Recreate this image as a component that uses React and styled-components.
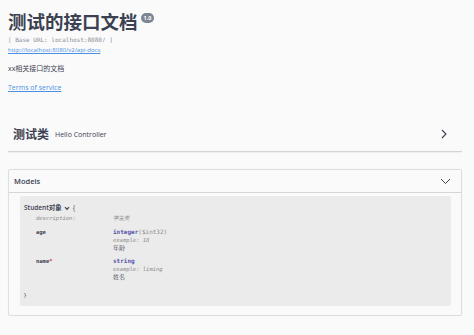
import React from 'react'
import styled, { createGlobalStyle } from 'styled-components'

const GlobalStyle = createGlobalStyle`
  html, body {
    margin: 0;
    padding: 0;
    background: #fafafa;
  }
  body {
    font-family: 'Open Sans', 'Noto Sans CJK SC', sans-serif;
    color: #3b4151;
  }
`

const SANS = `'Open Sans', 'Noto Sans CJK SC', sans-serif`
const MONO = `'DejaVu Sans Mono', 'Noto Sans CJK SC', monospace`

const ChevronRight = () => (
    <svg width="8" height="10" viewBox="0 0 8 10" fill="none">
        <path d="M2 1 L6 5 L2 9" stroke="#3b4151" strokeWidth="1.1" />
    </svg>
)

const ChevronDown = () => (
    <svg width="11" height="7" viewBox="0 0 11 7" fill="none">
        <path d="M1 1 L5.5 5.5 L10 1" stroke="#3b4151" strokeWidth="1" />
    </svg>
)

const SmallCaret = () => (
    <svg width="6" height="5" viewBox="0 0 6 5" fill="none">
        <path d="M1 1.2 L3 3.4 L5 1.2" stroke="#3b4151" strokeWidth="1.2" />
    </svg>
)

const App = () => {
    return (
        <>
            <GlobalStyle />
            <Page>
                <Info>
                    <Title>
                        测试的接口文档
                        <Version>1.0</Version>
                    </Title>
                    <BaseUrl>[ Base URL: localhost:8080/ ]</BaseUrl>
                    <DocLink href="#">http://localhost:8080/v2/api-docs</DocLink>
                    <Description>xx相关接口的文档</Description>
                    <Terms href="#">Terms of service</Terms>
                </Info>

                <TagRow>
                    <TagName>测试类</TagName>
                    <TagDesc>Hello Controller</TagDesc>
                    <TagArrow><ChevronRight /></TagArrow>
                </TagRow>

                <Models>
                    <ModelsHeader>
                        <span>Models</span>
                        <ChevronDown />
                    </ModelsHeader>
                    <ModelsBody>
                        <ModelBox>
                            <ModelTitle>
                                Student对象 <SmallCaret /> <Brace>{'{'}</Brace>
                            </ModelTitle>
                            <PropTable>
                                <PropName muted>description:</PropName>
                                <PropValue>
                                    <Example>学生类</Example>
                                </PropValue>

                                <PropName top="6px">age</PropName>
                                <PropValue top="6px">
                                    <TypeLine><Type>integer</Type><Format>($int32)</Format></TypeLine>
                                    <Example>example: 18</Example>
                                    <Note>年龄</Note>
                                </PropValue>

                                <PropName top="5px">name<Star>*</Star></PropName>
                                <PropValue top="5px">
                                    <TypeLine><Type>string</Type></TypeLine>
                                    <Example>example: liming</Example>
                                    <Note>姓名</Note>
                                </PropValue>
                            </PropTable>
                            <ClosingBrace>{'}'}</ClosingBrace>
                        </ModelBox>
                    </ModelsBody>
                </Models>
            </Page>
        </>
    )
}

export default App

const Page = styled.div`
padding: 0 12px 20px 8px;
`

const Info = styled.div`
padding-top: 10px;
display: flex;
flex-direction: column;
align-items: flex-start;
`

const Title = styled.h2`
margin: 0;
display: flex;
align-items: flex-start;
font-family: ${SANS};
font-size: 18.5px;
line-height: 24px;
font-weight: 700;
color: #3b4151;
`

const Version = styled.span`
margin: 3px 0 0 3px;
padding: 0 3px;
height: 10px;
line-height: 10px;
border-radius: 6px;
background: #7d8492;
color: #fff;
font-size: 5.5px;
font-weight: 700;
font-family: ${SANS};
`

const BaseUrl = styled.span`
margin-top: 1px;
font-family: ${MONO};
font-size: 6px;
line-height: 9px;
color: #8a8f99;
`

const DocLink = styled.a`
margin-top: 2px;
font-family: ${SANS};
font-size: 6px;
line-height: 9px;
color: #4990e2;
text-decoration: underline;
`

const Description = styled.div`
margin-top: 9px;
font-family: ${SANS};
font-size: 7px;
line-height: 10px;
color: #3b4151;
`

const Terms = styled.a`
margin-top: 9px;
font-family: ${SANS};
font-size: 7px;
line-height: 10px;
color: #4990e2;
text-decoration: underline;
`

const TagRow = styled.div`
margin-top: 24px;
height: 34px;
display: flex;
align-items: center;
padding: 0 10px 0 5px;
border-bottom: 1px solid #d3d4d7;
box-shadow: 0 1px 1px rgba(0, 0, 0, 0.04);
`

const TagName = styled.span`
font-family: ${SANS};
font-size: 12px;
font-weight: 700;
color: #3b4151;
`

const TagDesc = styled.span`
margin-left: 6px;
font-family: ${SANS};
font-size: 7px;
color: #3b4151;
`

const TagArrow = styled.span`
margin-left: auto;
margin-right: 4px;
display: flex;
`

const Models = styled.section`
margin-top: 17px;
border: 1px solid rgba(59, 65, 81, 0.15);
border-radius: 2px;
box-shadow: 0 0 2px rgba(0, 0, 0, 0.04);
`

const ModelsHeader = styled.div`
height: 22px;
display: flex;
align-items: center;
justify-content: space-between;
padding: 0 10px 0 5px;
border-bottom: 1px solid rgba(59, 65, 81, 0.2);
font-family: ${SANS};
font-size: 7.5px;
font-weight: 600;
color: #3b4151;
`

const ModelsBody = styled.div`
padding: 3px 10px 9px 11px;
`

const ModelBox = styled.div`
background: #ebebeb;
border-radius: 2px;
padding: 8px 4px 7px 4px;
`

const ModelTitle = styled.div`
display: flex;
align-items: center;
gap: 2px;
font-family: ${SANS};
font-size: 6.5px;
line-height: 8px;
font-weight: 600;
color: #3b4151;
`

const Brace = styled.span`
margin-left: 1px;
font-weight: 400;
`

const PropTable = styled.div`
display: grid;
grid-template-columns: 77px 1fr;
padding-left: 12px;
margin-top: 2px;
`

const PropName = styled.div`
padding-top: ${(p) => p.top || '0'};
font-family: ${MONO};
font-size: 5.5px;
line-height: 8px;
font-weight: ${(p) => (p.muted ? 400 : 700)};
font-style: ${(p) => (p.muted ? 'italic' : 'normal')};
color: ${(p) => (p.muted ? '#8a8a8a' : '#3b4151')};
`

const PropValue = styled.div`
padding-top: ${(p) => p.top || '0'};
display: flex;
flex-direction: column;
`

const TypeLine = styled.div`
font-family: ${MONO};
font-size: 6px;
line-height: 8px;
`

const Type = styled.span`
color: #55a;
font-weight: 600;
`

const Format = styled.span`
color: #8a8a8a;
`

const Example = styled.div`
font-family: ${MONO};
font-size: 5.5px;
line-height: 8px;
font-style: italic;
color: #8a8a8a;
`

const Note = styled.div`
font-family: 'Noto Serif CJK SC', 'Noto Sans CJK SC', serif;
font-size: 6px;
line-height: 8px;
color: #3b4151;
`

const Star = styled.span`
color: #e03b3b;
`

const ClosingBrace = styled.div`
margin-top: 10px;
font-family: ${SANS};
font-size: 6px;
line-height: 8px;
color: #3b4151;
`
